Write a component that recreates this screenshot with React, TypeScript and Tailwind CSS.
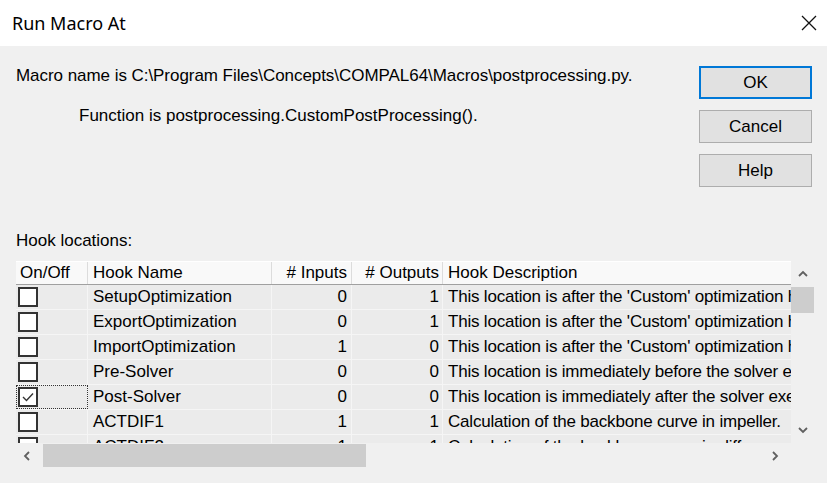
import React from 'react';

const rows = [
  { on: false, name: 'SetupOptimization', inputs: '0', outputs: '1', desc: "This location is after the 'Custom' optimization hook." },
  { on: false, name: 'ExportOptimization', inputs: '0', outputs: '1', desc: "This location is after the 'Custom' optimization hook." },
  { on: false, name: 'ImportOptimization', inputs: '1', outputs: '0', desc: "This location is after the 'Custom' optimization hook." },
  { on: false, name: 'Pre-Solver', inputs: '0', outputs: '0', desc: 'This location is immediately before the solver executes.' },
  { on: true, name: 'Post-Solver', inputs: '0', outputs: '0', desc: 'This location is immediately after the solver executes.' },
  { on: false, name: 'ACTDIF1', inputs: '1', outputs: '1', desc: 'Calculation of the backbone curve in impeller.' },
  { on: false, name: 'ACTDIF2', inputs: '1', outputs: '1', desc: 'Calculation of the backbone curve in diffuser.' },
];

const Chevron: React.FC<{ dir: 'up' | 'down' | 'left' | 'right' }> = ({ dir }) => {
  const d = {
    up: 'M2 7 L6 3 L10 7',
    down: 'M2 4 L6 8 L10 4',
    left: 'M7 2 L3 6 L7 10',
    right: 'M4 2 L8 6 L4 10',
  }[dir];
  return (
    <svg width="12" height="12" viewBox="0 0 12 12">
      <path d={d} fill="none" stroke="#606060" strokeWidth="1.8" />
    </svg>
  );
};

const Checkbox: React.FC<{ checked: boolean }> = ({ checked }) => (
  <div className="w-[20px] h-[20px] border-2 border-[#333333] bg-white flex items-center justify-center">
    {checked && (
      <svg width="14" height="14" viewBox="0 0 14 14">
        <path d="M2 7 L5.5 10.5 L12 3.5" fill="none" stroke="#333333" strokeWidth="1.4" />
      </svg>
    )}
  </div>
);

const Button: React.FC<{ label: string; primary?: boolean }> = ({ label, primary }) => (
  <button
    className={`w-[113px] h-[33px] bg-[#e1e1e1] text-[17px] text-black ${
      primary ? 'border-2 border-[#0078d7]' : 'border border-[#adadad]'
    }`}
  >
    {label}
  </button>
);

const App: React.FC = () => {
  return (
    <div className="w-[827px] h-[483px] overflow-hidden flex flex-col bg-[#f0f0f0] text-black font-['Liberation_Sans',Arial,sans-serif] text-[17px]">
      {/* Title bar */}
      <div className="h-[46px] bg-white flex items-center justify-between pl-[12px] pr-[10px] shrink-0">
        <span className="font-['Noto_Sans',sans-serif] text-[18px]">Run Macro At</span>
        <svg width="16" height="16" viewBox="0 0 16 16">
          <path d="M1 1 L15 15 M15 1 L1 15" stroke="#111" strokeWidth="1.3" />
        </svg>
      </div>

      {/* Top area */}
      <div className="flex justify-between pl-[16px] pr-[15px] pt-[20px]">
        <div className="flex flex-col">
          <p className="leading-[20px] tracking-[-0.05px]">Macro name is C:\Program Files\Concepts\COMPAL64\Macros\postprocessing.py.</p>
          <p className="leading-[20px] mt-[20px] pl-[63px]">Function is postprocessing.CustomPostProcessing().</p>
        </div>
        <div className="flex flex-col gap-[11px]">
          <Button label="OK" primary />
          <Button label="Cancel" />
          <Button label="Help" />
        </div>
      </div>

      <p className="leading-[20px] pl-[16px] mt-[44px]">Hook locations:</p>

      {/* List view */}
      <div className="ml-[16px] mt-[10px] w-[798px] h-[207px] grid grid-cols-[775px_23px] grid-rows-[182px_25px]">
        <div className="overflow-hidden bg-[#ebebeb]">
          <div className="w-[1100px]">
            <div className="flex h-[24px] bg-[#f9f9f9] border-b border-[#a0a0a0] border-t border-t-white">
              <div className="w-[72px] pl-[4px] border-r border-[#dcdcdc] leading-[22px]">On/Off</div>
              <div className="w-[184px] pl-[5px] border-r border-[#dcdcdc] leading-[22px]">Hook Name</div>
              <div className="w-[80px] pr-[4px] text-right border-r border-[#dcdcdc] leading-[22px]"># Inputs</div>
              <div className="w-[91px] pr-[3px] text-right border-r border-[#dcdcdc] leading-[22px]"># Outputs</div>
              <div className="flex-1 pl-[5px] leading-[22px] whitespace-nowrap">Hook Description</div>
            </div>
            {rows.map((r) => (
              <div key={r.name} className="flex h-[25px] border-b border-[#f5f5f5]">
                <div
                  className={`w-[72px] border-r border-[#f5f5f5] flex items-center pl-[2px] ${
                    r.on ? 'outline outline-1 outline-dotted outline-[#333] -outline-offset-1' : ''
                  }`}
                >
                  <Checkbox checked={r.on} />
                </div>
                <div className="w-[184px] pl-[5px] border-r border-[#f5f5f5] leading-[24px]">{r.name}</div>
                <div className="w-[80px] pr-[4px] text-right border-r border-[#f5f5f5] leading-[24px]">{r.inputs}</div>
                <div className="w-[91px] pr-[3px] text-right border-r border-[#f5f5f5] leading-[24px]">{r.outputs}</div>
                <div className="flex-1 pl-[5px] leading-[24px] whitespace-nowrap tracking-[-0.2px]">{r.desc}</div>
              </div>
            ))}
          </div>
        </div>

        {/* Vertical scrollbar */}
        <div className="flex flex-col items-center bg-[#f0f0f0]">
          <div className="h-[23px] flex items-center justify-center mt-[2px]">
            <Chevron dir="up" />
          </div>
          <div className="w-[23px] h-[26px] bg-[#cdcdcd] mt-[1px]" />
          <div className="flex-1" />
          <div className="h-[23px] flex items-center justify-center mb-[2px]">
            <Chevron dir="down" />
          </div>
        </div>

        {/* Horizontal scrollbar */}
        <div className="flex items-center bg-[#f0f0f0]">
          <div className="w-[24px] flex items-center justify-center">
            <Chevron dir="left" />
          </div>
          <div className="w-[323px] h-[23px] bg-[#cdcdcd] ml-[3px]" />
          <div className="flex-1" />
          <div className="w-[24px] flex items-center justify-center mr-[4px]">
            <Chevron dir="right" />
          </div>
        </div>
        <div className="bg-[#f0f0f0]" />
      </div>
    </div>
  );
};

export default App;
